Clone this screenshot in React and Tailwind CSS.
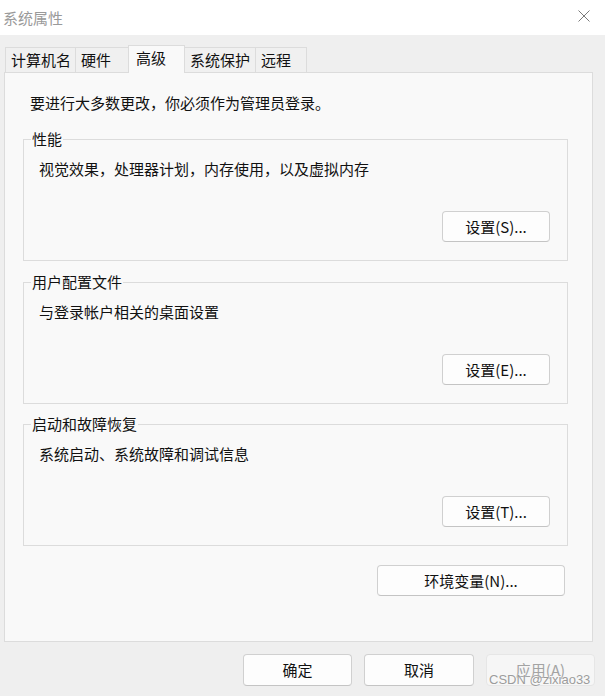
import React from "react";

function Btn({ children, className = "", disabled = false }) {
  return (
    <div
      className={
        "flex items-center justify-center rounded-[4px] border text-[15px] leading-[20px] " +
        (disabled
          ? "border-[#e6e6e6] bg-[#f6f6f6] text-[#a3a3a3] "
          : "border-[#d0d0d0] border-b-[#c4c4c4] bg-[#fdfdfd] text-[#111] ") +
        className
      }
    >
      {children}
    </div>
  );
}

function Group({ title, desc, button, className = "" }) {
  return (
    <fieldset className={"ml-[18px] w-[545px] border border-[#dcdcdc] " + className}>
      <legend className="ml-[7px] px-[1px] text-[15px] leading-[20px] text-[#111]">{title}</legend>
      <div className="mt-[10px] pl-[15px] text-[15px] leading-[20px] text-[#111]">{desc}</div>
      <div className="mt-[32px] flex justify-end pb-[18px] pr-[17px]">
        <Btn className="h-[31px] w-[108px]">{button}</Btn>
      </div>
    </fieldset>
  );
}

function Tab({ label, w, selected = false, first = false }) {
  if (selected) {
    return (
      <div
        className={
          "relative z-10 -mb-px flex h-[28px] items-start border-x border-t border-[#dcdcdc] bg-[#f9f9f9] pl-[7px] pt-[2px] text-[15px] leading-[20px] text-[#111] " +
          w
        }
      >
        {label}
      </div>
    );
  }
  return (
    <div
      className={
        "flex h-[25px] items-center border-t border-r border-[#dcdcdc] bg-[#f0f0f0] pl-[5px] text-[15px] leading-[20px] text-[#111] " +
        (first ? "border-l " : "") +
        w
      }
    >
      {label}
    </div>
  );
}

export default function App() {
  return (
    <div className="relative flex h-[696px] w-[605px] flex-col overflow-hidden bg-[#efefef] font-['Noto_Sans_CJK_SC',sans-serif]">
      {/* Title bar */}
      <div className="flex h-[35px] items-center justify-between bg-white pl-[3px] pr-[15px]">
        <span className="text-[15px] leading-[20px] text-[#9a9a9a]">系统属性</span>
        <svg width="12" height="12" viewBox="0 0 12 12" className="mb-[4px]">
          <path d="M0.5 0.5 L11.5 11.5 M11.5 0.5 L0.5 11.5" stroke="#7a7a7a" strokeWidth="1" fill="none" />
        </svg>
      </div>

      {/* Tabs */}
      <div className="ml-[5px] mt-[10px] flex h-[27px] items-end">
        <Tab label="计算机名" w="w-[71px]" first />
        <Tab label="硬件" w="w-[53px]" />
        <Tab label="高级" w="w-[57px] -ml-px" selected />
        <Tab label="系统保护" w="w-[71px]" />
        <Tab label="远程" w="w-[51px]" />
      </div>

      {/* Panel */}
      <div className="ml-[4px] flex h-[570px] w-[589px] flex-col border border-[#dcdcdc] bg-[#f9f9f9]">
        <div className="pl-[25px] pt-[20px] text-[15px] leading-[20px] text-[#111]">
          要进行大多数更改，你必须作为管理员登录。
        </div>
        <Group
          className="mt-[16px]"
          title="性能"
          desc="视觉效果，处理器计划，内存使用，以及虚拟内存"
          button="设置(S)..."
        />
        <Group className="mt-[11px]" title="用户配置文件" desc="与登录帐户相关的桌面设置" button="设置(E)..." />
        <Group
          className="mt-[10px]"
          title="启动和故障恢复"
          desc="系统启动、系统故障和调试信息"
          button="设置(T)..."
        />
        <div className="mt-[19px] flex justify-end pr-[27px]">
          <Btn className="h-[31px] w-[188px]">环境变量(N)...</Btn>
        </div>
      </div>

      {/* Bottom buttons */}
      <div className="ml-[243px] mt-[12px] flex gap-[12px]">
        <Btn className="h-[32px] w-[109px]">确定</Btn>
        <Btn className="h-[32px] w-[110px]">取消</Btn>
        <Btn className="h-[32px] w-[109px]" disabled>
          应用(A)
        </Btn>
      </div>

      {/* Watermark */}
      <div className="pointer-events-none absolute left-[489px] top-[672px] font-['Liberation_Sans',sans-serif] text-[13px] leading-[16px] text-[#9c9c9c] [text-shadow:0_0_2px_#ffffff]">
        CSDN @zixiao33
      </div>
    </div>
  );
}
